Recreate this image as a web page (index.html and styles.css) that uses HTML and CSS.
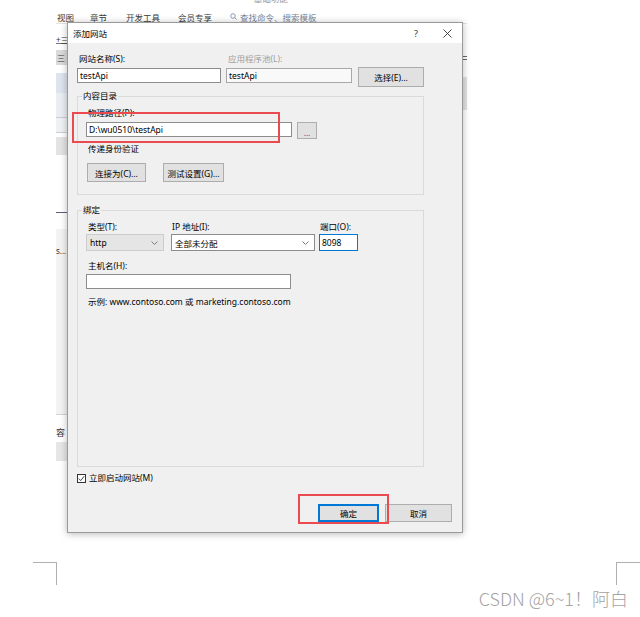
FILE: index.html
```html
<!DOCTYPE html>
<html lang="zh-CN">
<head>
<meta charset="utf-8">
<title>添加网站</title>
<link rel="stylesheet" href="styles.css">
</head>
<body>
<div class="page">
  <div class="doc">
    <div class="doc-top"><span class="cut">▪ 基础功能</span></div>
    <div class="menu">
      <span class="mi mi1">视图</span>
      <span class="mi mi2">章节</span>
      <span class="mi mi3">开发工具</span>
      <span class="mi mi4">会员专享</span>
      <span class="search">
        <svg width="7" height="7" viewBox="0 0 7 7"><circle cx="3" cy="3" r="2.3" fill="none" stroke="#8090a8" stroke-width="0.9"/><line x1="4.7" y1="4.7" x2="6.6" y2="6.6" stroke="#8090a8" stroke-width="0.9"/></svg>
        查找命令、搜索模板
      </span>
    </div>
    <div class="doc-body">
      <div class="strip">
        <div class="s-gap1"></div>
        <div class="s-plus">+三</div>
        <div class="s-gap2"></div>
        <div class="s-box">三</div>
        <div class="s-gap3"></div>
        <div class="s-blue1"></div>
        <div class="s-blue2"></div>
        <div class="s-blue3"></div>
        <div class="s-gray1"></div>
        <div class="s-white1"></div>
        <div class="s-dark"></div>
        <div class="s-white2"></div>
        <div class="s-panel"><span class="s-dots">s...</span></div>
        <div class="s-white3"><span class="s-rong">容</span></div>
        <div class="s-gray2"></div>
      </div>
      <div class="doc-main"></div>
      <div class="strip-r">
        <div class="r-gap1"></div>
        <div class="r-tick"></div>
        <div class="r-gap2"></div>
        <div class="r-gray"></div>
      </div>
    </div>
  </div>

  <div class="footer">
    <div class="marks">
      <div class="mark mark-l"></div>
      <div class="mark mark-r"></div>
    </div>
    <div class="watermark">CSDN @6~1！阿白</div>
  </div>

  <div class="dialog">
    <div class="titlebar">
      <span class="title">添加网站</span>
      <span class="help">?</span>
      <span class="close"><svg width="9" height="9" viewBox="0 0 9 9"><line x1="0.5" y1="0.5" x2="8.5" y2="8.5" stroke="#333" stroke-width="0.9"/><line x1="8.5" y1="0.5" x2="0.5" y2="8.5" stroke="#333" stroke-width="0.9"/></svg></span>
    </div>
    <div class="body">
      <div class="top-row">
        <div class="col c-name">
          <div class="lbl">网站名称(S):</div>
          <div class="tb">testApi</div>
        </div>
        <div class="col c-pool">
          <div class="lbl dim">应用程序池(L):</div>
          <div class="tb ro">testApi</div>
        </div>
        <div class="col c-sel">
          <div class="btn b-select">选择(E)...</div>
        </div>
      </div>

      <fieldset class="group g1">
        <legend>内容目录</legend>
        <div class="lbl">物理路径(P):</div>
        <div class="row path-row">
          <div class="tb path">D:\wu0510\testApi</div>
          <div class="btn dots">...</div>
        </div>
        <div class="lbl auth">传递身份验证</div>
        <div class="row btn-row">
          <div class="btn b-conn">连接为(C)...</div>
          <div class="btn b-test">测试设置(G)...</div>
        </div>
      </fieldset>

      <fieldset class="group g2">
        <legend>绑定</legend>
        <div class="row bind-row">
          <div class="col c-type">
            <div class="lbl">类型(T):</div>
            <div class="sel dis"><span>http</span><svg width="7" height="4" viewBox="0 0 7 4"><polyline points="0.5,0.5 3.5,3.5 6.5,0.5" fill="none" stroke="#707070" stroke-width="0.9"/></svg></div>
          </div>
          <div class="col c-ip">
            <div class="lbl">IP 地址(I):</div>
            <div class="sel"><span>全部未分配</span><svg width="7" height="4" viewBox="0 0 7 4"><polyline points="0.5,0.5 3.5,3.5 6.5,0.5" fill="none" stroke="#707070" stroke-width="0.9"/></svg></div>
          </div>
          <div class="col c-port">
            <div class="lbl">端口(O):</div>
            <div class="tb port">8098</div>
          </div>
        </div>
        <div class="lbl host-l">主机名(H):</div>
        <div class="tb host"></div>
        <div class="lbl ex">示例: www.contoso.com 或 marketing.contoso.com</div>
      </fieldset>

      <div class="check-row">
        <span class="cb"><svg width="7" height="7" viewBox="0 0 7 7"><polyline points="0.8,3.6 2.7,5.6 6.2,1.2" fill="none" stroke="#333" stroke-width="0.9"/></svg></span>
        <span class="cb-label">立即启动网站(M)</span>
      </div>

      <div class="actions">
        <div class="btn b-ok">确定</div>
        <div class="btn b-cancel">取消</div>
      </div>
    </div>
  </div>

  <div class="redbox rb1"></div>
  <div class="redbox rb2"></div>
</div>
</body>
</html>
```

FILE: styles.css
```css
* { box-sizing: border-box; }
html, body { margin: 0; padding: 0; }
body {
  width: 640px;
  height: 617px;
  overflow: hidden;
  background: #fff;
  font-family: "Noto Sans", "Noto Sans CJK SC", sans-serif;
  font-size: 8.5px;
  color: #000;
}
.page {
  position: relative;
  width: 640px;
  height: 617px;
  display: flex;
  flex-direction: column;
}

/* background document screenshot */
.doc {
  margin-left: 56px;
  width: 411px;
  height: 540px;
  display: flex;
  flex-direction: column;
  background: #fff;
}
.doc-top { height: 10px; overflow: hidden; }
.cut {
  display: block;
  margin-top: -6px;
  padding-left: 187px;
  line-height: 10px;
  color: #999;
}
.menu {
  height: 14px;
  display: flex;
  align-items: center;
  color: #3a3a3a;
  border-bottom: 1px solid #e2e2e2;
  white-space: nowrap;
}
.mi { display: block; }
.mi1 { width: 34px; padding-left: 1px; }
.mi2 { width: 36px; }
.mi3 { width: 52px; }
.mi4 { width: 52px; }
.search { color: #7c8494; display: flex; align-items: center; gap: 3px; }
.doc-body { flex: 1; display: flex; }
.strip { width: 11px; display: flex; flex-direction: column; overflow: hidden; font-size: 8px; color: #333; }
.s-gap1 { height: 12px; }
.s-plus { height: 8px; line-height: 8px; border-bottom: 1px solid #777; white-space: nowrap; }
.s-gap2 { height: 6px; }
.s-box { height: 15px; background: #dadada; line-height: 15px; padding-left: 1px; }
.s-gap3 { height: 8px; }
.s-blue1 { height: 20px; background: #dde4ee; }
.s-blue2 { height: 25px; background: #eaeef3; border-bottom: 1px solid #c9ced6; }
.s-blue3 { height: 15px; background: #eff1f4; border-bottom: 1px solid #c9ced6; }
.s-gray1 { height: 18px; background: #e3e3e3; margin-top: 4px; }
.s-white1 { height: 57px; }
.s-dark { height: 1px; background: #5d5d7a; }
.s-white2 { height: 16px; }
.s-panel { height: 186px; background: #f3f3f3; border-bottom: 1px solid #d2d2d2; padding-top: 17px; }
.s-dots { display: block; line-height: 10px; white-space: nowrap; }
.s-white3 { height: 27px; padding-top: 13px; }
.s-rong { display: block; line-height: 10px; font-size: 9px; }
.s-gray2 { height: 19px; background: #e6e6e6; }
.doc-main { flex: 1; }
.strip-r { width: 4px; display: flex; flex-direction: column; }
.r-gap1 { height: 32px; }
.r-tick { height: 4px; border-top: 1px solid #666; border-bottom: 1px solid #666; }
.r-gap2 { height: 17px; }
.r-gray { height: 33px; background: #e2e2e2; }

/* footer marks + watermark */
.footer { flex: 1; padding-top: 22px; }
.marks { display: flex; height: 23px; }
.mark { width: 24px; height: 23px; border-top: 1px solid #b0b0b0; }
.mark-l { margin-left: 33px; border-right: 1px solid #b0b0b0; }
.mark-r { margin-left: auto; border-left: 1px solid #b0b0b0; }
.watermark {
  margin-top: 3px;
  line-height: 20px;
  text-align: right;
  padding-right: 12px;
  font-family: "Noto Sans CJK SC", sans-serif;
  font-size: 18px;
  font-weight: 300;
  color: #a3a3a3;
}

/* dialog window */
.dialog {
  position: absolute;
  left: 67px;
  top: 22px;
  width: 396px;
  height: 511px;
  border: 1px solid #9a9a9a;
  background: #f0f0f0;
  box-shadow: 0 1px 7px rgba(0, 0, 0, 0.28);
  display: flex;
  flex-direction: column;
}
.titlebar {
  height: 20px;
  background: #fff;
  display: flex;
  align-items: center;
  padding-left: 5px;
}
.title { flex: 1; }
.help { width: 14px; text-align: center; margin-right: 9px; font-size: 9px; color: #333; }
.close { width: 30px; height: 20px; display: flex; align-items: center; justify-content: center; }
.close svg { display: block; }

.body {
  flex: 1;
  display: flex;
  flex-direction: column;
  padding: 10px 10px 10px 9px;
}
.row { display: flex; align-items: flex-start; }
.col { display: flex; flex-direction: column; }
.lbl { height: 12px; line-height: 12px; padding-left: 2px; white-space: nowrap; }
.dim { color: #a0a0a0; padding-left: 2px; }

.tb {
  height: 15px;
  line-height: 13px;
  border: 1px solid #8c8c8c;
  background: #fff;
  padding: 0 2px;
  white-space: nowrap;
  overflow: hidden;
}
.tb.ro { background: #f9f9f9; border-color: #a8a8a8; }
.btn {
  border: 1px solid #adadad;
  background: #e1e1e1;
  display: flex;
  align-items: center;
  justify-content: center;
  white-space: nowrap;
}

.top-row { display: flex; height: 34px; margin-right: 28px; }
.c-name { width: 144px; }
.c-pool { width: 126px; margin-left: 5px; }
.c-sel { width: 66px; margin-left: 6px; }
.top-row .tb { margin-top: 3px; }
.b-select { height: 20px; margin-top: 14px; }

.group {
  margin: 0 28px 0 0;
  min-width: 0;
  border: 1px solid #dadada;
  padding: 5px 8px 12px 8px;
}
.group legend {
  padding: 0 1px;
  margin-left: -4px;
  line-height: 12px;
  height: 12px;
}
.g1 { margin-top: 3px; }
.path-row { margin-top: 3px; }
.path { width: 206px; }
.dots { width: 20px; height: 17px; margin-left: 5px; color: #4a4a8a; font-size: 8px; padding-top: 3px; }
.auth { margin-top: 4px; }
.btn-row { margin-top: 8px; }
.b-conn { width: 59px; height: 19px; margin-left: 1px; }
.b-test { width: 61px; height: 19px; margin-left: 17px; }

.g2 { margin-top: 9px; flex: 1; }
.c-type { width: 78px; }
.c-ip { width: 144px; margin-left: 7px; }
.c-port { width: 39px; margin-left: 4px; }
.c-ip .lbl, .c-port .lbl { padding-left: 1px; }
.sel {
  margin-top: 1px;
  height: 17px;
  border: 1px solid #8c8c8c;
  background: #fff;
  display: flex;
  align-items: center;
  justify-content: space-between;
  padding: 0 5px 0 3px;
  white-space: nowrap;
}
.sel.dis { background: #e5e5e5; border-color: #cccccc; }
.sel svg { display: block; }
.port { margin-top: 1px; height: 17px; line-height: 15px; border-color: #0078d7; }
.host-l { margin-top: 9px; }
.host { width: 205px; margin-top: 2px; }
.ex { margin-top: 7px; }

.check-row {
  margin-top: 5px;
  height: 12px;
  display: flex;
  align-items: center;
}
.cb {
  width: 9px;
  height: 9px;
  border: 1px solid #333;
  background: #fff;
  display: flex;
  align-items: center;
  justify-content: center;
}
.cb svg { display: block; }
.cb-label { margin-left: 3px; line-height: 12px; }

.actions {
  margin-top: 20px;
  display: flex;
  justify-content: flex-end;
}
.b-ok { width: 61px; height: 18px; border-color: #0078d7; box-shadow: inset 0 0 0 1px #0078d7; }
.b-cancel { width: 67px; height: 18px; margin-left: 6px; }

/* red annotation boxes drawn over the dialog */
.redbox { position: absolute; border: 2px solid #ea4a50; }
.rb1 { left: 72px; top: 112px; width: 208px; height: 31px; }
.rb2 { left: 298px; top: 494px; width: 91px; height: 30px; }
```
